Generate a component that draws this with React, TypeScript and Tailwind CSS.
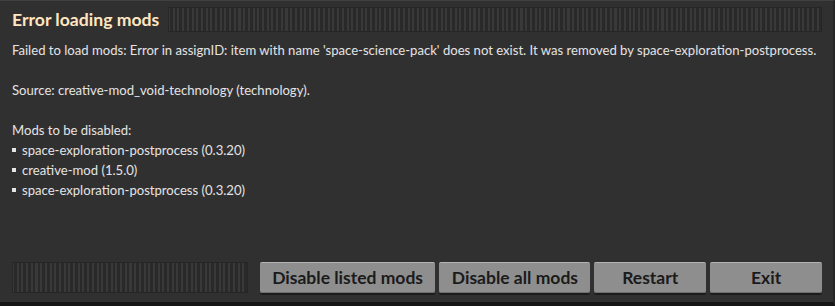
import React from 'react'

const stripe =
  'bg-[repeating-linear-gradient(90deg,#393939_0px,#393939_2px,#292929_2px,#292929_4.7px)]'

function Filler({ className }: { className: string }) {
  return <div className={`${stripe} shadow-[inset_0_0_0_1px_#262626] ${className}`} />
}

function Button({ label, width }: { label: string; width: string }) {
  return (
    <button
      className={`${width} h-[31px] rounded-[2px] bg-[#8e8e8e] border-t border-[#b4b4b4] shadow-[0_2px_0_#1c1c1c,inset_0_-1px_0_#6e6e6e] text-[17.5px] font-bold text-[#1b1b1b]`}
    >
      {label}
    </button>
  )
}

export default function App() {
  const mods = [
    'space-exploration-postprocess (0.3.20)',
    'creative-mod (1.5.0)',
    'space-exploration-postprocess (0.3.20)',
  ]

  return (
    <div
      className="w-[835px] h-[306px] flex flex-col bg-[#313031] border-t border-[#424142] border-b-4 border-b-[#161616] border-r-2 border-r-[#262626]"
      style={{ fontFamily: 'Lato, "Liberation Sans", sans-serif' }}
    >
      <div className="flex items-center pl-3 pr-[11px] pt-[6px]">
        <h1 className="text-[17.6px] font-bold text-[#ffe6c0] leading-[25px]">Error loading mods</h1>
        <Filler className="ml-[9px] flex-1 h-[25px]" />
      </div>

      <div className="px-3 mt-[8px] text-[13.1px] leading-[20px] text-[#e4e4e4] whitespace-nowrap">
        <p>
          Failed to load mods: Error in assignID: item with name 'space-science-pack' does not exist. It was
          removed by space-exploration-postprocess.
        </p>
        <p className="mt-5">Source: creative-mod_void-technology (technology).</p>
        <p className="mt-5">Mods to be disabled:</p>
        <ul>
          {mods.map((m, i) => (
            <li key={i} className="flex items-center">
              <span className="w-[4px] h-[4px] bg-[#e4e4e4] mr-[6px]" />
              {m}
            </li>
          ))}
        </ul>
      </div>

      <div className="mt-auto flex items-start gap-1 pl-3 pr-[11px] pb-[9px]">
        <Filler className="w-[236px] h-[31px] mr-2" />
        <Button label="Disable listed mods" width="w-[176px]" />
        <Button label="Disable all mods" width="w-[151px]" />
        <Button label="Restart" width="w-[112px]" />
        <Button label="Exit" width="w-[112px]" />
      </div>
    </div>
  )
}
